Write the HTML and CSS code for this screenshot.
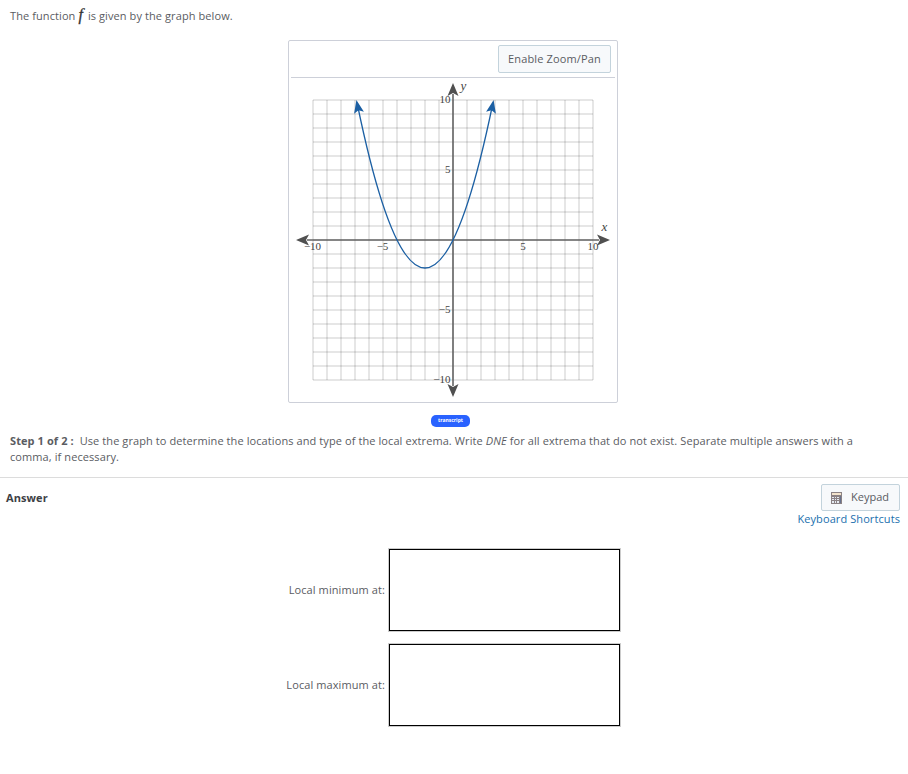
FILE: index.html
```html
<!DOCTYPE html>
<html lang="en">
<head>
    <meta charset="UTF-8">
    <meta name="viewport" content="width=device-width, initial-scale=1.0">
    <title>Local Extrema</title>
    <link rel="stylesheet" href="styles.css">
</head>
<body>
    <div class="question">
        <p class="prompt">The function <span class="math">f</span> is given by the graph below.</p>

        <div class="graph">
            <div class="graph-toolbar">
                <button class="btn btn-zoom">Enable Zoom/Pan</button>
            </div>
            <!-- origin is the centre of the plot, one unit is 14px -->
            <svg class="plot" width="328" height="324" viewBox="-164 -162 328 324">
                <path class="grid" id="grid" d=""/>
                <path class="axis" d="M-146 0H146M0 -146V146"/>
                <g class="axis-arrow">
                    <path d="M157 0L144 -5.5L147 0L144 5.5Z"/>
                    <path d="M157 0L144 -5.5L147 0L144 5.5Z" transform="rotate(90)"/>
                    <path d="M157 0L144 -5.5L147 0L144 5.5Z" transform="rotate(180)"/>
                    <path d="M157 0L144 -5.5L147 0L144 5.5Z" transform="rotate(270)"/>
                </g>
                <path class="curve" d="M-95.5 -135Q-28 191 39.5 -135"/>
                <path class="curve-arrow" d="M0 0L-5 13L0 10.5L5 13Z" transform="translate(-96.6 -140) rotate(-11.5)"/>
                <path class="curve-arrow" d="M0 0L-5 13L0 10.5L5 13Z" transform="translate(40.6 -140) rotate(11.5)"/>
                <g class="ticks">
                    <text x="-140.5" y="10" text-anchor="middle">−10</text>
                    <text x="-70.5" y="10" text-anchor="middle">−5</text>
                    <text x="70" y="10" text-anchor="middle">5</text>
                    <text x="140" y="10" text-anchor="middle">10</text>
                    <text x="-2.5" y="-137" text-anchor="end">10</text>
                    <text x="-2.5" y="-67" text-anchor="end">5</text>
                    <text x="-2.5" y="73" text-anchor="end">−5</text>
                    <text x="-2.5" y="143" text-anchor="end">−10</text>
                </g>
                <text class="axis-name" x="148.5" y="-9">x</text>
                <text class="axis-name" x="7.5" y="-150">y</text>
            </svg>
        </div>

        <div class="transcript"><span>transcript</span></div>

        <p class="step"><strong>Step 1 of 2 :</strong> Use the graph to determine the locations and type of the local extrema. Write <em>DNE</em> for all extrema that do not exist. Separate multiple answers with a comma, if necessary.</p>
    </div>

    <div class="answer">
        <div class="answer-header">
            <h2>Answer</h2>
            <div class="tools">
                <button class="btn btn-keypad">
                    <svg width="11" height="12" viewBox="0 0 11 12">
                        <path fill="#8b8284" d="M0 0H11V12H0Z"/>
                        <path fill="#f3e3cb" d="M1 1H10V3H1Z"/>
                        <path fill="#e6ebf2" d="M1 5H3V6H1ZM4 5H5V6H4ZM6 5H8V6H6ZM1 7H3V8H1ZM4 7H5V8H4ZM6 7H8V8H6ZM1 9H3V11H1ZM4 9H5V11H4ZM6 9H8V11H6Z"/>
                        <path fill="#66718d" d="M9 4H10V11H9Z"/>
                    </svg>
                    <span>Keypad</span>
                </button>
                <a class="shortcuts">Keyboard Shortcuts</a>
            </div>
        </div>

        <div class="fields">
            <label class="field"><span>Local minimum at:</span><input type="text"></label>
            <label class="field"><span>Local maximum at:</span><input type="text"></label>
        </div>
    </div>

    <script>
        let d = '';
        for (let i = -10; i <= 10; i++) {
            d += `M${i * 14} -140V140M-140 ${i * 14}H140`;
        }
        document.getElementById('grid').setAttribute('d', d);
    </script>
</body>
</html>
```
FILE: styles.css
```css
* { box-sizing: border-box; }
body {
    margin: 0;
    background: white;
    font-family: "Open Sans", sans-serif;
    font-size: 11px;
    line-height: 16px;
    letter-spacing: 0.09px;
    color: #5a5c62;
}
p, h2 { margin: 0; }
.question {
    height: 478px;
    padding: 8px 10px 0;
    border-bottom: 1px solid #dcdcdc;
}
.prompt {
    height: 32px;
    line-height: 15px;
}
.math {
    margin-right: 2px;
    font: italic 16px/12px "Liberation Serif", serif;
    color: #333;
    -webkit-text-stroke: 0.3px #333;
}
.graph {
    width: 330px;
    height: 363px;
    margin: 0 0 0 278px;
    border: 1px solid #cdd0d9;
    border-radius: 2px;
}
.graph-toolbar {
    display: flex;
    justify-content: flex-end;
    height: 37px;
    margin: 0 2px;
    padding: 4px 4px 0 0;
    border-bottom: 1px solid #cdd0d9;
}
.btn {
    font-family: inherit;
    font-size: 11px;
    color: #5a5c62;
    background: #f7f9fb;
    border: 1px solid #c3d3dc;
    border-radius: 2px;
}
.btn-zoom {
    width: 113px;
    height: 28px;
    padding: 0 0 2px;
    letter-spacing: 0.15px;
}
.plot {
    display: block;
    letter-spacing: 0;
}
.grid { stroke: #000; stroke-opacity: 0.2; fill: none; }
.axis { stroke: #666; stroke-width: 1.6; }
.axis-arrow { fill: #505050; }
.curve { stroke: #1b5fa3; stroke-width: 1.3; fill: none; }
.curve-arrow { fill: #1b5fa3; }
.ticks {
    font: 11px "Liberation Serif", serif;
    fill: #444;
}
.axis-name {
    font: italic 13px "Liberation Serif", serif;
    fill: #444;
}
.transcript {
    display: flex;
    justify-content: center;
    width: 39px;
    height: 12px;
    margin: 12px 0 0 421px;
    border-radius: 5px;
    background: #2962ff;
    color: white;
    font: bold 5px/11px "Open Sans", sans-serif;
    letter-spacing: 0;
}
.step {
    margin-top: 6px;
    padding-right: 30px;
}
.step strong { margin-right: 3px; }
.answer-header {
    display: flex;
    justify-content: space-between;
    padding: 6px 8px 0 6px;
}
.answer-header h2 {
    padding-top: 6px;
    font-size: 11px;
    line-height: 16px;
    color: #3d4045;
}
.tools {
    display: flex;
    flex-direction: column;
    align-items: flex-end;
}
.btn-keypad {
    display: flex;
    align-items: center;
    gap: 9px;
    width: 79px;
    height: 27px;
    padding: 0 0 0 9px;
}
.btn-keypad span { padding-bottom: 2px; }
.shortcuts { color: #1a6fae; }
.fields {
    display: flex;
    flex-direction: column;
    gap: 11px;
    margin-top: 21px;
}
.field {
    display: flex;
    align-items: center;
    gap: 3px;
}
.field span {
    width: 385px;
    text-align: right;
}
.field input {
    width: 233px;
    height: 84px;
    border: 1px solid #ccc;
    outline: 1px solid #000;
    outline-offset: -2px;
}
```
